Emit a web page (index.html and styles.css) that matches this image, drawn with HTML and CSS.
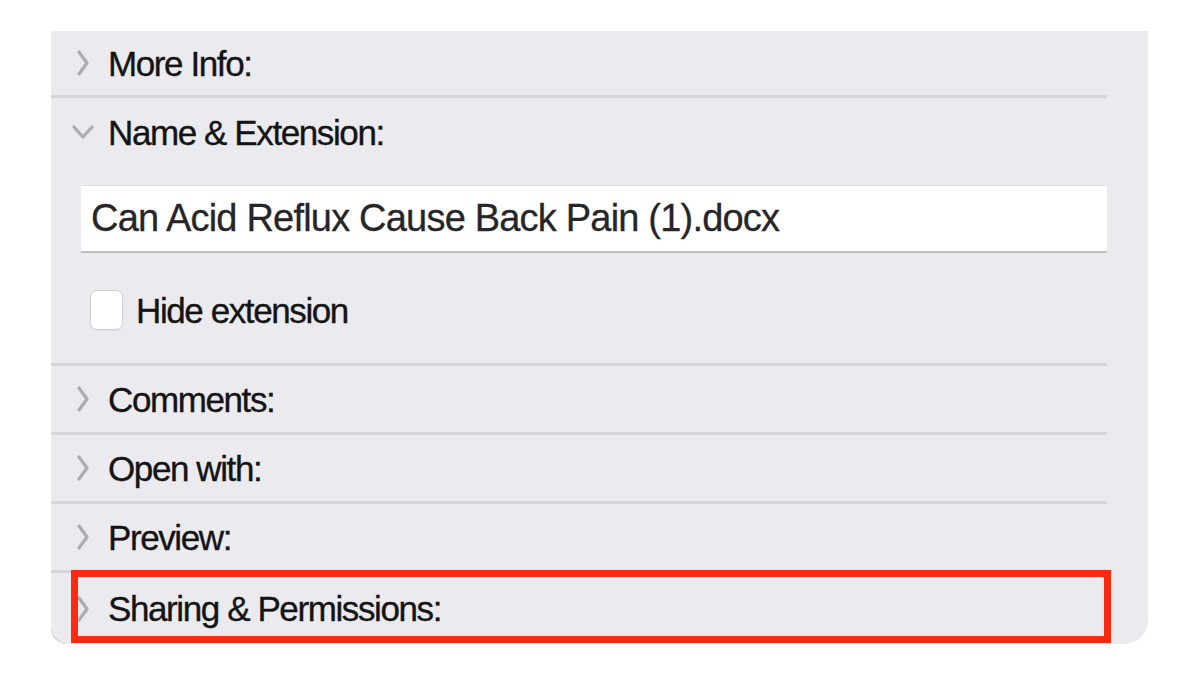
FILE: index.html
```html
<!DOCTYPE html>
<html lang="en">
<head>
  <meta charset="UTF-8">
  <title>Info</title>
  <link rel="stylesheet" href="styles.css">
</head>
<body>
  <div class="window">
    <div class="panel">
      <div class="row first">
        <div class="head">
          <span class="chev"><svg width="12" height="26" viewBox="0 0 12 26"><polyline points="2,2 10,13 2,24" /></svg></span>
          <span class="label">More Info:</span>
        </div>
      </div>

      <div class="row open">
        <div class="head">
          <span class="chev"><svg width="22" height="16" viewBox="0 0 22 16"><polyline points="2,3 11,13 20,3" /></svg></span>
          <span class="label">Name &amp; Extension:</span>
        </div>
        <div class="field">Can Acid Reflux Cause Back Pain (1).docx</div>
        <div class="check">
          <span class="box"></span>
          <span class="label">Hide extension</span>
        </div>
      </div>

      <div class="row">
        <div class="head">
          <span class="chev"><svg width="12" height="26" viewBox="0 0 12 26"><polyline points="2,2 10,13 2,24" /></svg></span>
          <span class="label">Comments:</span>
        </div>
      </div>

      <div class="row">
        <div class="head">
          <span class="chev"><svg width="12" height="26" viewBox="0 0 12 26"><polyline points="2,2 10,13 2,24" /></svg></span>
          <span class="label">Open with:</span>
        </div>
      </div>

      <div class="row">
        <div class="head">
          <span class="chev"><svg width="12" height="26" viewBox="0 0 12 26"><polyline points="2,2 10,13 2,24" /></svg></span>
          <span class="label">Preview:</span>
        </div>
      </div>

      <div class="row last">
        <div class="head">
          <span class="chev"><svg width="12" height="26" viewBox="0 0 12 26"><polyline points="2,2 10,13 2,24" /></svg></span>
          <span class="label">Sharing &amp; Permissions:</span>
        </div>
        <div class="highlight"></div>
      </div>
    </div>
  </div>
</body>
</html>
```

FILE: styles.css
```css
body { margin: 0; background: #fff; font-family: "Liberation Sans", Arial, sans-serif; }
.window { margin: 31px 0 0 51px; width: 1097px; background: linear-gradient(180deg, #ebeaef 80%, #bdbdc0 100%); border-radius: 0 0 26px 16px; }
.panel { background: #ebeaef; border-radius: 0 0 24px 18px; overflow: hidden; }
.row { margin-right: 41px; border-bottom: 3px solid #d6d5da; position: relative; }
.row.first .head { height: 64px; }
.row.last { border-bottom: none; }
.row.last .head { height: 71px; }
.head { height: 66px; display: flex; align-items: center; padding-left: 20px; }
.chev { width: 24px; display: flex; justify-content: center; margin-right: 13px; }
.chev svg polyline { fill: none; stroke: #adadb0; stroke-width: 3.2; stroke-linecap: round; stroke-linejoin: round; }
.label { font-size: 35px; letter-spacing: -1.4px; color: #141414; line-height: 1; -webkit-text-stroke: 0.35px #141414; }
.open .head { height: 68px; }
.field { margin: 19px 0 0 30px; height: 65px; background: #fff; border-top: 1px solid #dedde2; border-bottom: 2px solid #bfbfc3; display: flex; align-items: center; padding-left: 10px; font-size: 38px; letter-spacing: -0.8px; color: #262628; -webkit-text-stroke: 0.3px #262628; }
.check { display: flex; align-items: center; margin: 37px 0 0 39px; padding-bottom: 33px; }
.box { width: 31px; height: 38px; background: #fff; border: 1px solid #d0d0d4; border-radius: 7px; margin-right: 13px; box-shadow: 0 1px 1px rgba(0,0,0,0.06); }
.highlight { position: absolute; top: -3px; left: 20px; right: -4px; bottom: 1px; border: 7px solid #ff2a0f; }
```
